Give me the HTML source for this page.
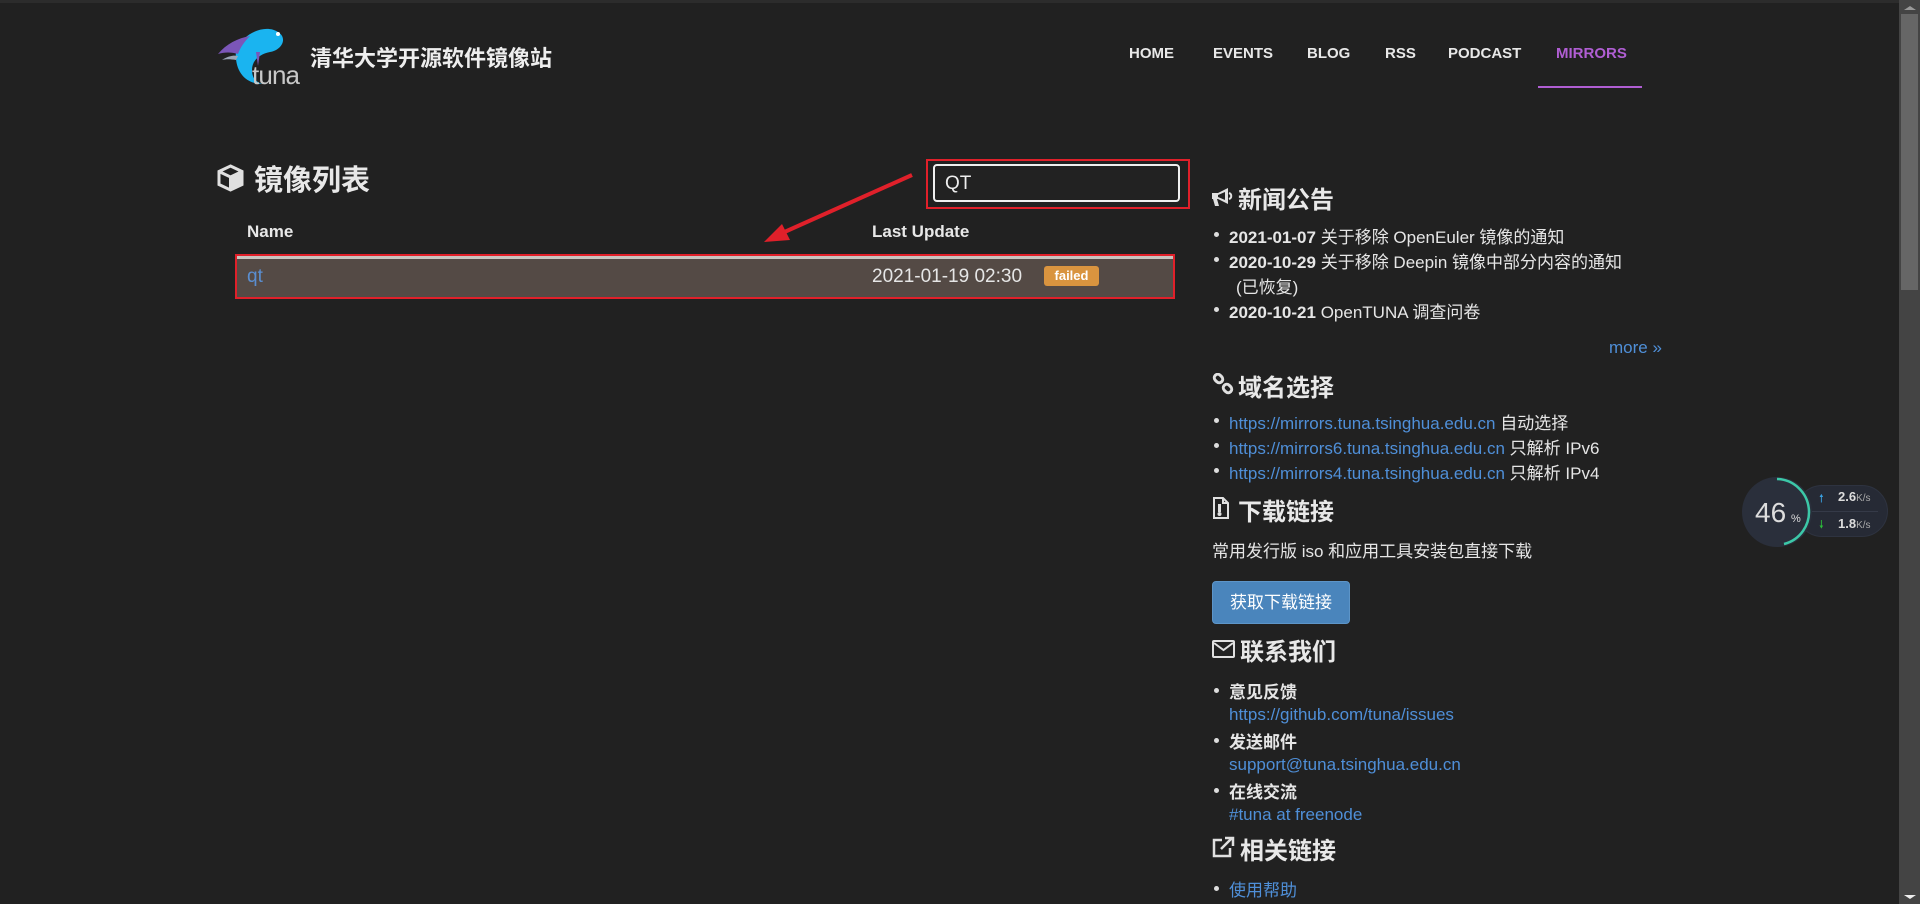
<!DOCTYPE html>
<html><head><meta charset="utf-8"><style>
*{margin:0;padding:0;box-sizing:border-box}
body{width:1920px;height:904px;background:#212121;color:#e6e6e6;font-family:"Liberation Sans","Noto Sans CJK SC",sans-serif;position:relative;overflow:hidden}
.a{position:absolute;white-space:nowrap}
a{color:#4f8fd8;text-decoration:none}
.nav{font-size:15px;font-weight:bold;color:#e8e8e8;top:45px}
.h{font-size:24px;font-weight:bold;color:#e8e8e8}
.li{font-size:17px;color:#e6e6e6}
.dot{position:absolute;width:5px;height:5px;border-radius:50%;background:#ddd}
</style></head><body>
<div class="a" style="left:0;top:0;width:1920px;height:3px;background:#2c2c2c"></div>
<svg class="a" style="left:216px;top:22px" width="86" height="66" viewBox="0 0 86 66">
<path d="M20 28 C28 10 50 2 62 10 C72 16 66 28 54 30 C44 32 36 38 36 48 C36 56 40 60 46 62 C30 62 18 50 20 28Z" fill="#1ab4f0"/>
<path d="M2 32 C10 22 22 16 34 14 C28 20 24 26 22 32 C16 30 8 30 2 32Z" fill="#7b56b8"/>
<path d="M6 38 C12 34 18 33 22 34 L20 38 C14 37 10 37 6 38Z" fill="#9aa5b5"/>
<path d="M40 30 L42 44 L44 30Z" fill="#7b56b8"/>
<circle cx="62" cy="12" r="2" fill="#fff"/>
<text x="36" y="62" font-family="Liberation Sans,sans-serif" font-size="26" fill="#c8c8c8" textLength="48">tuna</text>
</svg>
<div class="a" style="left:310px;top:41px;font-size:22px;font-weight:bold;color:#eee">清华大学开源软件镜像站</div>
<div class="a nav" style="left:1129px">HOME</div>
<div class="a nav" style="left:1213px">EVENTS</div>
<div class="a nav" style="left:1307px">BLOG</div>
<div class="a nav" style="left:1385px">RSS</div>
<div class="a nav" style="left:1448px">PODCAST</div>
<div class="a nav" style="left:1556px;color:#b05ed3">MIRRORS</div>
<div class="a" style="left:1538px;top:86px;width:104px;height:2px;background:#b05ed3"></div>
<svg class="a" style="left:217px;top:164px" width="27" height="28" viewBox="0 0 27 28"><path d="M13.5 2 L25 7.5 V20.5 L13.5 26 L2 20.5 V7.5Z" fill="none" stroke="#e0e0e0" stroke-width="3"/><path d="M2 7.5 L13.5 13 L25 7.5 M13.5 13 V26" stroke="#e0e0e0" stroke-width="3" fill="none"/><path d="M13.5 13 L25 7.5 V20.5 L13.5 26Z" fill="#e0e0e0"/></svg>
<div class="a" style="left:254px;top:157px;font-size:29px;font-weight:bold;color:#e8e8e8">镜像列表</div>
<div class="a" style="left:926px;top:159px;width:264px;height:50px;border:2px solid #e0202a"></div>
<div class="a" style="left:933px;top:164px;width:247px;height:38px;border:2px solid #f0f0f0;border-radius:4px;background:#222;font-size:19px;padding:7px 0 0 10px;color:#eee">QT</div>
<svg class="a" style="left:0;top:0" width="1920" height="904"><line x1="912" y1="175" x2="780" y2="234" stroke="#e0202a" stroke-width="4"/><path d="M764 242 L782 224 L790 240Z" fill="#e0202a"/></svg>
<div class="a" style="left:247px;top:222px;font-size:17px;font-weight:bold;color:#e8e8e8">Name</div>
<div class="a" style="left:872px;top:222px;font-size:17px;font-weight:bold;color:#e8e8e8">Last Update</div>
<div class="a" style="left:235px;top:254px;width:940px;height:45px;border:2px solid #e0202a;background:#544a45"></div>
<div class="a" style="left:237px;top:256px;width:936px;height:3px;background:#c8c4c0"></div>
<div class="a" style="left:247px;top:266px;font-size:19px"><a style="color:#5a8ed0">qt</a></div>
<div class="a" style="left:872px;top:266px;font-size:19px;color:#e6e6e6">2021-01-19 02:30</div>
<div class="a" style="left:1044px;top:266px;width:55px;height:20px;background:#d9943f;border-radius:3px;color:#fff;font-size:13px;font-weight:bold;text-align:center;line-height:20px">failed</div>
<svg class="a" style="left:1211px;top:187px" width="22" height="20" viewBox="0 0 22 20"><path d="M1 6 H7 L17 1 V17 L7 12 H6 L8 19 H4 L2 12 H1Z" fill="#e0e0e0"/><path d="M18 6 C21 7 21 11 18 12" stroke="#e0e0e0" stroke-width="2" fill="none"/><path d="M7 8 L14 5 V13 L7 10Z" fill="#212121"/></svg>
<div class="a h" style="left:1238px;top:180px">新闻公告</div>
<div class="dot" style="left:1214px;top:232px"></div><div class="a li" style="left:1229px;top:223px"><b>2021-01-07</b> 关于移除 OpenEuler 镜像的通知</div>
<div class="dot" style="left:1214px;top:257px"></div><div class="a li" style="left:1229px;top:248px"><b>2020-10-29</b> 关于移除 Deepin 镜像中部分内容的通知</div>
<div class="a li" style="left:1236px;top:273px">(已恢复)</div>
<div class="dot" style="left:1214px;top:307px"></div><div class="a li" style="left:1229px;top:298px"><b>2020-10-21</b> OpenTUNA 调查问卷</div>
<div class="a" style="left:1609px;top:338px;font-size:17px"><a>more »</a></div>
<svg class="a" style="left:1212px;top:373px" width="22" height="22" viewBox="0 0 22 22"><g fill="none" stroke="#e0e0e0" stroke-width="3"><rect x="2" y="2" width="9" height="7" rx="3.5" transform="rotate(45 6.5 5.5)"/><rect x="11" y="12" width="9" height="7" rx="3.5" transform="rotate(45 15.5 15.5)"/></g></svg>
<div class="a h" style="left:1238px;top:368px">域名选择</div>
<div class="dot" style="left:1214px;top:418px"></div><div class="a li" style="left:1229px;top:409px"><a>https://mirrors.tuna.tsinghua.edu.cn</a> 自动选择</div>
<div class="dot" style="left:1214px;top:443px"></div><div class="a li" style="left:1229px;top:434px"><a>https://mirrors6.tuna.tsinghua.edu.cn</a> 只解析 IPv6</div>
<div class="dot" style="left:1214px;top:468px"></div><div class="a li" style="left:1229px;top:459px"><a>https://mirrors4.tuna.tsinghua.edu.cn</a> 只解析 IPv4</div>
<svg class="a" style="left:1212px;top:496px" width="18" height="24" viewBox="0 0 18 24"><path d="M2 2 H11 L16 7 V22 H2Z M11 2 V7 H16" fill="none" stroke="#e0e0e0" stroke-width="2"/><rect x="6" y="8" width="3" height="8" fill="#e0e0e0"/><circle cx="7.5" cy="18" r="2" fill="#e0e0e0"/></svg>
<div class="a h" style="left:1238px;top:492px">下载链接</div>
<div class="a li" style="left:1212px;top:537px">常用发行版 iso 和应用工具安装包直接下载</div>
<div class="a" style="left:1212px;top:581px;width:138px;height:43px;background:#4a85bc;border:1px solid #5d95c8;border-radius:4px;color:#fff;font-size:17px;text-align:center;line-height:41px">获取下载链接</div>
<svg class="a" style="left:1212px;top:640px" width="23" height="18" viewBox="0 0 23 18"><rect x="1" y="1" width="21" height="16" rx="1" fill="none" stroke="#e0e0e0" stroke-width="2"/><path d="M2 3 L11.5 10 L21 3" fill="none" stroke="#e0e0e0" stroke-width="2"/></svg>
<div class="a h" style="left:1240px;top:632px">联系我们</div>
<div class="dot" style="left:1214px;top:688px"></div><div class="a li" style="left:1229px;top:678px"><b>意见反馈</b></div>
<div class="a li" style="left:1229px;top:705px"><a>https://github.com/tuna/issues</a></div>
<div class="dot" style="left:1214px;top:738px"></div><div class="a li" style="left:1229px;top:728px"><b>发送邮件</b></div>
<div class="a li" style="left:1229px;top:755px"><a>support@tuna.tsinghua.edu.cn</a></div>
<div class="dot" style="left:1214px;top:788px"></div><div class="a li" style="left:1229px;top:778px"><b>在线交流</b></div>
<div class="a li" style="left:1229px;top:805px"><a>#tuna at freenode</a></div>
<svg class="a" style="left:1212px;top:836px" width="23" height="22" viewBox="0 0 23 22"><path d="M10 4 H2 V20 H18 V12" fill="none" stroke="#e0e0e0" stroke-width="2.5"/><path d="M9 13 L20 2 M13 2 H21 V10" fill="none" stroke="#e0e0e0" stroke-width="2.5"/></svg>
<div class="a h" style="left:1240px;top:831px">相关链接</div>
<div class="dot" style="left:1214px;top:886px"></div><div class="a li" style="left:1229px;top:876px"><a>使用帮助</a></div>
<div class="a" style="left:1796px;top:485px;width:92px;height:52px;border-radius:26px;background:#262a35;border:1px solid #2e3340"></div>
<div class="a" style="left:1808px;top:511px;width:70px;height:1px;background:#353a48"></div>
<div class="a" style="left:1819px;top:490px;font-size:11px;color:#3aa0e0">🠕</div>
<div class="a" style="left:1838px;top:489px;font-size:13px;font-weight:bold;color:#ddd">2.6<span style="font-size:10px;font-weight:normal;color:#aaa">K/s</span></div>
<div class="a" style="left:1819px;top:516px;font-size:11px;color:#2cbb3a">🠗</div>
<div class="a" style="left:1838px;top:516px;font-size:13px;font-weight:bold;color:#ddd">1.8<span style="font-size:10px;font-weight:normal;color:#aaa">K/s</span></div>
<svg class="a" style="left:1741px;top:476px" width="72" height="72" viewBox="0 0 72 72"><circle cx="36" cy="36" r="35" fill="#2a2f3b"/><path d="M36 3 A33 33 0 0 1 43 68" fill="none" stroke="#3cc8a8" stroke-width="2.5"/><text x="14" y="46" font-family="Liberation Sans,sans-serif" font-size="28" fill="#ddd">46</text><text x="50" y="46" font-family="Liberation Sans,sans-serif" font-size="11" fill="#ddd">%</text></svg>
<div class="a" style="left:1899px;top:0;width:21px;height:904px;background:#444"></div>
<div class="a" style="left:1901px;top:14px;width:17px;height:276px;background:#666"></div>
<div class="a" style="left:1904px;top:6px;width:0;height:0;border-left:6px solid transparent;border-right:6px solid transparent;border-bottom:4px solid #999"></div>
<div class="a" style="left:1904px;top:895px;width:0;height:0;border-left:6px solid transparent;border-right:6px solid transparent;border-top:4px solid #eee"></div>
</body></html>
